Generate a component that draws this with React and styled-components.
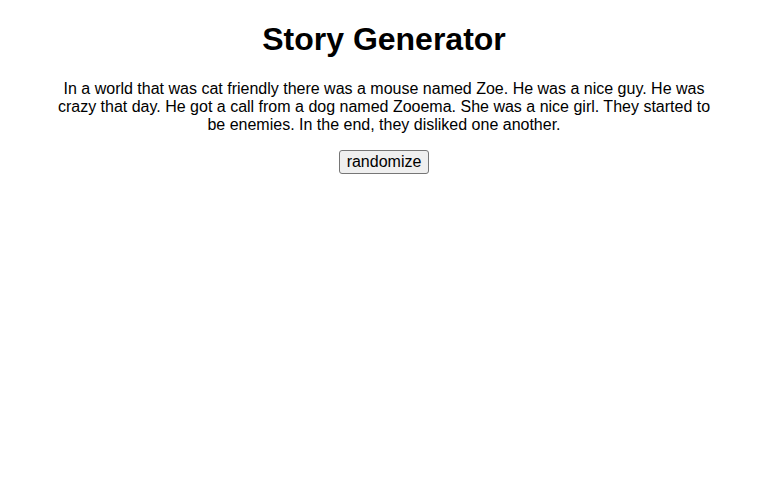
import React, { useState } from "react";
import styled, { createGlobalStyle } from "styled-components";

const GlobalStyle = createGlobalStyle`
  body {
    margin: 0;
    background: #fff;
    color: #000;
    font-family: "Liberation Sans", Arial, sans-serif;
  }
`;

const Page = styled.main`
  text-align: center;
`;

const Title = styled.h1`
  font-size: 32px;
  font-weight: bold;
  margin: 21.44px 0;
`;

const Story = styled.p`
  max-width: 660px;
  margin: 16px auto;
  font-size: 16px;
`;

const RandomButton = styled.button`
  font-family: "Liberation Sans", Arial, sans-serif;
  font-size: 16px;
  color: #000;
  background: #efefef;
  border: 1px solid #767676;
  border-radius: 3px;
  padding: 2px 7px;
  cursor: pointer;

  &:hover {
    background: #e5e5e5;
  }
`;

const stories = [
  "In a world that was cat friendly there was a mouse named Zoe. He was a nice guy. He was crazy that day. He got a call from a dog named Zooema. She was a nice girl. They started to be enemies. In the end, they disliked one another.",
  "In a world that was dog friendly there was a cat named Milo. He was a shy guy. He was happy that day. He got a call from a bird named Pip. She was a loud girl. They started to be friends. In the end, they liked one another.",
];

export default function App() {
  const [index, setIndex] = useState(0);

  return (
    <Page>
      <GlobalStyle />
      <Title>Story Generator</Title>
      <Story>{stories[index]}</Story>
      <RandomButton onClick={() => setIndex((index + 1) % stories.length)}>
        randomize
      </RandomButton>
    </Page>
  );
}
